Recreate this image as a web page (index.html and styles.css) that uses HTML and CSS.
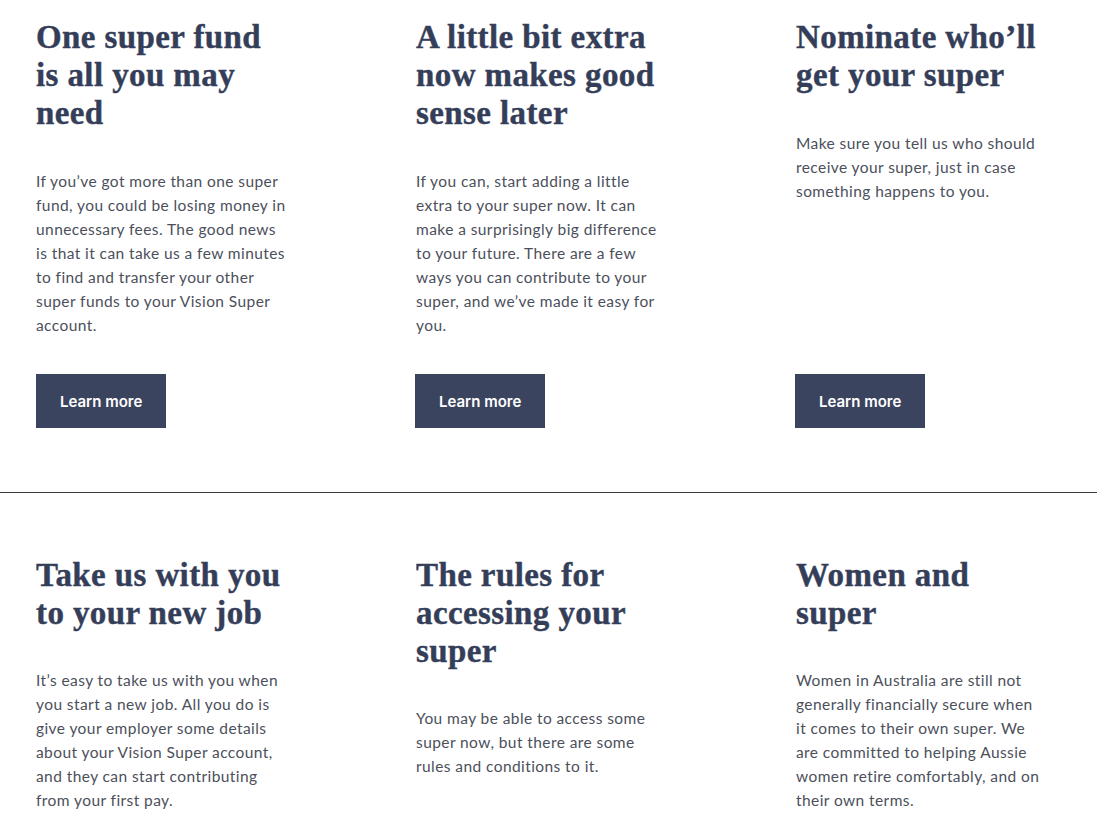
FILE: index.html
```html
<!DOCTYPE html>
<html lang="en">
<head>
<meta charset="utf-8">
<title>Vision Super</title>
<link rel="stylesheet" href="styles.css">
</head>
<body>
<section class="row row-top">
  <div class="card">
    <h2 class="title">One super fund is all you may need</h2>
    <p class="text">If you’ve got more than one super fund, you could be losing money in unnecessary fees. The good news is that it can take us a few minutes to find and transfer your other super funds to your Vision Super account.</p>
    <a class="btn" href="#">Learn more</a>
  </div>
  <div class="card">
    <h2 class="title">A little bit extra now makes good sense later</h2>
    <p class="text">If you can, start adding a little extra to your super now. It can make a surprisingly big difference to your future. There are a few ways you can contribute to your super, and we’ve made it easy for you.</p>
    <a class="btn" href="#">Learn more</a>
  </div>
  <div class="card">
    <h2 class="title">Nominate who’ll get your super</h2>
    <p class="text">Make sure you tell us who should receive your super, just in case something happens to you.</p>
    <a class="btn" href="#">Learn more</a>
  </div>
</section>
<hr class="divider">
<section class="row row-bottom">
  <div class="card">
    <h2 class="title">Take us with you to your new job</h2>
    <p class="text">It’s easy to take us with you when you start a new job. All you do is give your employer some details about your Vision Super account, and they can start contributing from your first pay.</p>
  </div>
  <div class="card">
    <h2 class="title">The rules for accessing your super</h2>
    <p class="text">You may be able to access some super now, but there are some rules and conditions to it.</p>
  </div>
  <div class="card">
    <h2 class="title">Women and super</h2>
    <p class="text">Women in Australia are still not generally financially secure when it comes to their own super. We are committed to helping Aussie women retire comfortably, and on their own terms.</p>
  </div>
</section>
</body>
</html>
```

FILE: styles.css
```css
html, body {
  margin: 0;
  padding: 0;
  background: #ffffff;
}

body {
  overflow: hidden;
}

.row {
  display: grid;
  grid-template-columns: 380px 380px 1fr;
  padding-left: 36px;
}

.row-top {
  padding-top: 18px;
  padding-bottom: 64px;
}

.row-bottom {
  padding-top: 63px;
}

.card {
  display: flex;
  flex-direction: column;
  align-items: flex-start;
  width: 251px;
}

.title {
  margin: 0 0 37px 0;
  font-family: "Liberation Serif", "Times New Roman", serif;
  font-weight: 700;
  font-size: 33px;
  line-height: 38px;
  letter-spacing: 0.4px;
  -webkit-text-stroke: 0.4px #353e59;
  color: #353e59;
}

.row-bottom .title {
  margin-bottom: 36px;
}

.text {
  margin: 0 0 37px 0;
  font-family: "Lato", "Open Sans", sans-serif;
  font-size: 15.5px;
  line-height: 24px;
  letter-spacing: 0.42px;
  color: #4c505b;
}

.btn {
  margin-top: auto;
  margin-left: -1px;
  display: inline-flex;
  align-items: center;
  justify-content: center;
  height: 54px;
  padding: 0 24px;
  background: #3b445f;
  color: #ffffff;
  text-decoration: none;
  font-family: "Inter", "Liberation Sans", sans-serif;
  font-weight: 600;
  font-size: 15px;
}

.row .card:first-child .btn {
  margin-left: 0;
}

.divider {
  margin: 0;
  border: 0;
  border-top: 1px solid #3a3a3a;
}
```
